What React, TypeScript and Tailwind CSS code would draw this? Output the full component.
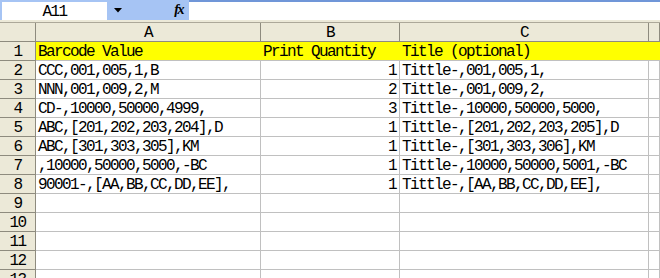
import React from "react";

const rows: [string, string, string][] = [
  ["Barcode Value", "Print Quantity", "Title (optional)"],
  ["CCC,001,005,1,B", "1", "Tittle-,001,005,1,"],
  ["NNN,001,009,2,M", "2", "Tittle-,001,009,2,"],
  ["CD-,10000,50000,4999,", "3", "Tittle-,10000,50000,5000,"],
  ["ABC,[201,202,203,204],D", "1", "Tittle-,[201,202,203,205],D"],
  ["ABC,[301,303,305],KM", "1", "Tittle-,[301,303,306],KM"],
  [",10000,50000,5000,-BC", "1", "Tittle-,10000,50000,5001,-BC"],
  ["90001-,[AA,BB,CC,DD,EE],", "1", "Tittle-,[AA,BB,CC,DD,EE],"],
  ["", "", ""],
  ["", "", ""],
  ["", "", ""],
  ["", "", ""],
  ["", "", ""],
];

const font = { fontFamily: '"Liberation Mono", "DejaVu Sans Mono", monospace' };

export default function App() {
  return (
    <div
      className="w-[660px] h-[278px] overflow-hidden bg-white text-black text-[16px] tracking-[-1.6px] leading-none"
      style={font}
    >
      {/* formula bar */}
      <div className="flex h-[20px] bg-[#a6c4f4]">
        <div className="ml-[2px] mt-[2px] w-[105px] h-[18px] bg-white flex items-center justify-center pt-[2px]">
          A11
        </div>
        <div className="w-[82px] h-[20px] flex items-center justify-between pl-[7px] pr-[4px]">
          <svg width="8" height="5" viewBox="0 0 8 5">
            <polygon points="0,0 8,0 4,4.5" fill="#000" />
          </svg>
          <span
            className="italic font-bold text-[14px] tracking-[-1.5px] pr-[2px]"
            style={{ fontFamily: '"Liberation Serif", serif' }}
          >
            fx
          </span>
        </div>
        <div className="flex-1 h-[20px] bg-white border-t-2 border-[#7096d8]" />
      </div>
      <div className="h-[2px] bg-[#ece9d8] border-b border-[#aca899] box-content" />
      {/* sheet */}
      <div className="grid grid-cols-[36px_225px_139px_249px_1fr]">
        {/* column headers */}
        <div className="h-[19px] bg-[#ece9d8] border-r border-b border-[#8e8b7e]" />
        {["A", "B", "C", ""].map((c, i) => (
          <div
            key={i}
            className="h-[19px] bg-[#ece9d8] border-r border-b border-[#8e8b7e] flex items-center justify-center pt-[2px]"
          >
            {c}
          </div>
        ))}
        {rows.map((r, i) => {
          const yellow = i === 0;
          const cell = yellow
            ? "h-[19px] bg-[#ffff00] border-b border-[#c0c0c0] flex items-center pt-[2px] whitespace-nowrap overflow-hidden"
            : "h-[19px] border-r border-b border-[#c0c0c0] flex items-center pt-[2px] whitespace-nowrap overflow-hidden";
          return (
            <React.Fragment key={i}>
              <div className="h-[19px] bg-[#ece9d8] border-r border-b border-[#8e8b7e] flex items-center justify-center pt-[2px]">
                {i + 1}
              </div>
              <div className={cell + " pl-[2px]"}>{r[0]}</div>
              <div className={cell + (yellow ? " pl-[2px]" : " justify-end pr-[3px]")}>{r[1]}</div>
              <div className={cell + " pl-[2px]"}>{r[2]}</div>
              <div className={cell} />
            </React.Fragment>
          );
        })}
      </div>
    </div>
  );
}
